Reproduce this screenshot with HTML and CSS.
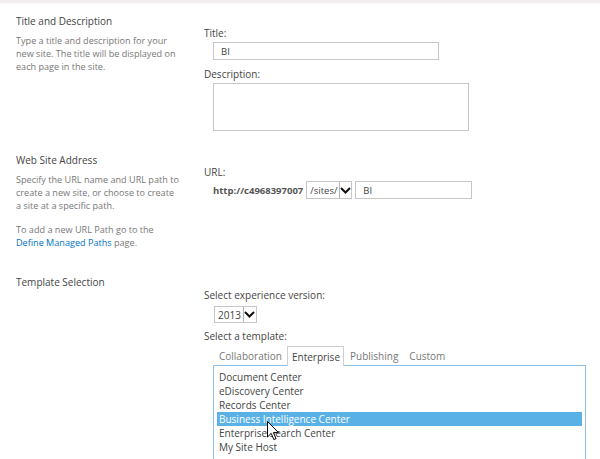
FILE: index.html
```html
<!DOCTYPE html>
<html>
<head>
<meta charset="utf-8">
<link rel="stylesheet" href="styles.css">
</head>
<body>
<div class="topstrip"></div>

<section class="sec sec1">
  <div class="left">
    <div class="heading">Title and Description</div>
    <div class="desc">Type a title and description for your new site. The title will be displayed on each page in the site.</div>
  </div>
  <div class="right">
    <div class="label lbl-title">Title:</div>
    <div class="field input title-input">BI</div>
    <div class="label lbl-desc">Description:</div>
    <div class="field textarea"></div>
  </div>
</section>

<section class="sec sec2">
  <div class="left">
    <div class="heading">Web Site Address</div>
    <div class="desc">Specify the URL name and URL path to create a new site, or choose to create a site at a specific path.</div>
    <div class="desc desc2">To add a new URL Path go to the <a class="link">Define Managed Paths</a> page.</div>
  </div>
  <div class="right">
    <div class="label lbl-url">URL:</div>
    <div class="urlrow">
      <span class="urlhost">http://c4968397007</span>
      <span class="select sel-sites"><span class="seltext">/sites/</span><span class="selbtn"><svg width="11" height="7" viewBox="0 0 11 7"><polyline points="1,1 5.5,5.5 10,1" fill="none" stroke="#111" stroke-width="2"/></svg></span></span>
      <span class="field input url-input">BI</span>
    </div>
  </div>
</section>

<section class="sec sec3">
  <div class="left">
    <div class="heading">Template Selection</div>
  </div>
  <div class="right">
    <div class="label lbl-ver">Select experience version:</div>
    <div class="select sel-ver"><span class="seltext">2013</span><span class="selbtn"><svg width="11" height="7" viewBox="0 0 11 7"><polyline points="1,1 5.5,5.5 10,1" fill="none" stroke="#111" stroke-width="2"/></svg></span></div>
    <div class="label lbl-tpl">Select a template:</div>
    <div class="tabs">
      <span class="tab">Collaboration</span>
      <span class="tab active">Enterprise</span>
      <span class="tab">Publishing</span>
      <span class="tab">Custom</span>
    </div>
    <div class="listbox">
      <div class="item">Document Center</div>
      <div class="item">eDiscovery Center</div>
      <div class="item">Records Center</div>
      <div class="item selected">Business Intelligence Center</div>
      <div class="item">Enterprise Search Center</div>
      <div class="item">My Site Host</div>
      <svg class="cursor" width="13" height="20" viewBox="0 0 13 20"><path d="M0.5,0.5 L0.5,16 L4.2,12.4 L6.8,18.6 L9,17.6 L6.4,11.6 L11.5,11.6 Z" fill="#fff" stroke="#000" stroke-width="1" stroke-linejoin="miter"/></svg>
    </div>
  </div>
</section>
</body>
</html>
```

FILE: styles.css
```css
* { box-sizing: border-box; }
html, body {
  margin: 0;
  padding: 0;
  background: #fff;
  width: 600px;
  height: 459px;
  overflow: hidden;
}
body {
  font-family: "Open Sans", "Noto Sans", sans-serif;
  font-size: 10px;
  color: #444;
}
.topstrip {
  height: 3px;
  background: #f2eeee;
}
.sec {
  display: grid;
  grid-template-columns: 204px 1fr;
}
.left {
  padding-left: 16px;
  padding-right: 25px;
}
.heading {
  font-size: 10px;
  line-height: 13px;
  color: #444;
}
.desc {
  font-size: 9.1px;
  line-height: 13px;
  color: #777;
  margin-top: 6px;
}
.desc2 { margin-top: 11px; }
.link { color: #0072c6; text-decoration: none; }

.label {
  font-size: 10px;
  line-height: 13px;
  color: #444;
}
.field {
  border: 1px solid #c6c6c6;
  background: #fff;
  font-size: 9.5px;
  color: #444;
}
.input {
  display: flex;
  align-items: center;
  padding-left: 7px;
  height: 18px;
}

/* Section 1 */
.sec1 { padding-top: 12px; }
.lbl-title { margin-top: 12px; }
.title-input { margin: 2px 0 0 9px; width: 226px; }
.lbl-desc { margin-top: 8px; }
.textarea { margin: 2px 0 0 9px; width: 256px; height: 48px; }

/* Section 2 */
.sec2 { padding-top: 23px; }
.lbl-url { margin-top: 12px; }
.urlrow {
  display: flex;
  align-items: center;
  margin: 2px 0 0 9px;
  height: 18px;
}
.urlhost {
  font-weight: bold;
  font-size: 9.5px;
  color: #555;
  margin-right: 3px;
}
.select {
  display: inline-flex;
  border: 1px solid #c6c6c6;
  height: 18px;
  background: #fff;
  font-size: 9.5px;
  color: #444;
}
.seltext {
  display: flex;
  align-items: center;
  padding: 0 2px 0 3px;
}
.selbtn {
  display: flex;
  align-items: center;
  justify-content: center;
  width: 15px;
  border-left: 1px solid #b4b4b4;
  background: #fff;
}
.sel-sites { width: 46px; }
.sel-sites .seltext { flex: 1; }
.url-input { margin-left: 3px; width: 117px; }

/* Section 3 */
.sec3 { padding-top: 27px; }
.lbl-ver { margin-top: 13px; }
.sel-ver { margin: 4px 0 0 10px; width: 43px; height: 17px; }
.sel-ver .seltext { flex: 1; font-size: 10px; }
.lbl-tpl { margin-top: 7px; }
.tabs {
  display: flex;
  margin: 3px 0 0 9px;
  height: 19px;
  position: relative;
  z-index: 1;
}
.tab {
  display: flex;
  align-items: center;
  padding: 0 4px 0 5px;
  font-size: 10px;
  color: #777;
  border: 1px solid transparent;
  border-bottom: none;
}
.tab.active {
  color: #444;
  border-color: #cfcfcf;
  background: #fff;
  height: 20px;
  padding: 0 3px 0 4px;
}
.listbox {
  position: relative;
  margin-left: 9px;
  width: 373px;
  height: 94px;
  overflow: hidden;
  border: 1px solid #8ec2ea;
  border-bottom: none;
  padding: 4px 3px 0 3px;
}
.item {
  font-size: 10px;
  line-height: 14px;
  height: 14px;
  color: #444;
  padding-left: 2px;
}
.item.selected {
  background: #5ab1e6;
  color: #fff;
}
.cursor {
  position: absolute;
  left: 53px;
  top: 55px;
}
```
